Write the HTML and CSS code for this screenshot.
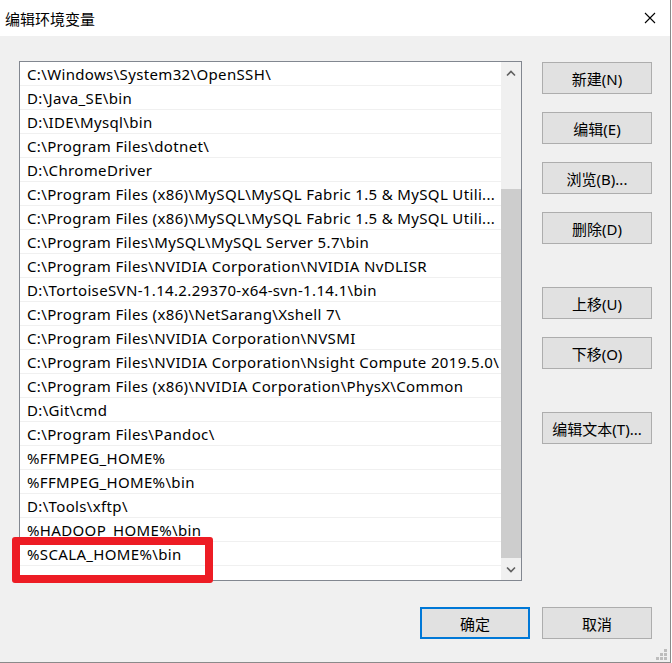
FILE: index.html
```html
<!DOCTYPE html>
<html lang="zh-CN">
<head>
    <meta charset="UTF-8">
    <title>编辑环境变量</title>
    <link rel="stylesheet" href="styles.css">
</head>
<body>
    <div class="window">
        <div class="titlebar">
            <span class="title">编辑环境变量</span>
            <svg class="close" width="12" height="12" viewBox="0 0 12 12">
                <path d="M1 1 L11 11 M11 1 L1 11" stroke="#000" stroke-width="1.1" fill="none"/>
            </svg>
        </div>

        <div class="content">
            <div class="main">
                <!-- liste des chemins -->
                <div class="path-list">
                    <div class="rows">
                        <div class="row">C:\Windows\System32\OpenSSH\</div>
                        <div class="row">D:\Java_SE\bin</div>
                        <div class="row">D:\IDE\Mysql\bin</div>
                        <div class="row">C:\Program Files\dotnet\</div>
                        <div class="row">D:\ChromeDriver</div>
                        <div class="row">C:\Program Files (x86)\MySQL\MySQL Fabric 1.5 &amp; MySQL Utili...</div>
                        <div class="row">C:\Program Files (x86)\MySQL\MySQL Fabric 1.5 &amp; MySQL Utili...</div>
                        <div class="row">C:\Program Files\MySQL\MySQL Server 5.7\bin</div>
                        <div class="row">C:\Program Files\NVIDIA Corporation\NVIDIA NvDLISR</div>
                        <div class="row">D:\TortoiseSVN-1.14.2.29370-x64-svn-1.14.1\bin</div>
                        <div class="row">C:\Program Files (x86)\NetSarang\Xshell 7\</div>
                        <div class="row">C:\Program Files\NVIDIA Corporation\NVSMI</div>
                        <div class="row">C:\Program Files\NVIDIA Corporation\Nsight Compute 2019.5.0\</div>
                        <div class="row">C:\Program Files (x86)\NVIDIA Corporation\PhysX\Common</div>
                        <div class="row">D:\Git\cmd</div>
                        <div class="row">C:\Program Files\Pandoc\</div>
                        <div class="row">%FFMPEG_HOME%</div>
                        <div class="row">%FFMPEG_HOME%\bin</div>
                        <div class="row">D:\Tools\xftp\</div>
                        <div class="row">%HADOOP_HOME%\bin</div>
                        <div class="row">%SCALA_HOME%\bin</div>
                        <div class="row"></div>
                    </div>
                    <div class="scrollbar">
                        <div class="arrow">
                            <svg width="10" height="7" viewBox="0 0 10 7">
                                <path d="M1 5.5 L5 1.5 L9 5.5" stroke="#606060" stroke-width="1.6" fill="none"/>
                            </svg>
                        </div>
                        <div class="track">
                            <div class="thumb"></div>
                        </div>
                        <div class="arrow">
                            <svg width="10" height="7" viewBox="0 0 10 7">
                                <path d="M1 1.5 L5 5.5 L9 1.5" stroke="#606060" stroke-width="1.6" fill="none"/>
                            </svg>
                        </div>
                    </div>
                </div>

                <div class="side-buttons">
                    <button class="btn">新建(N)</button>
                    <button class="btn">编辑(E)</button>
                    <button class="btn">浏览(B)...</button>
                    <button class="btn">删除(D)</button>
                    <button class="btn spaced">上移(U)</button>
                    <button class="btn">下移(O)</button>
                    <button class="btn spaced">编辑文本(T)...</button>
                </div>
            </div>

            <div class="footer">
                <button class="btn default">确定</button>
                <button class="btn">取消</button>
            </div>

            <div class="grip-row">
                <svg width="11" height="11" viewBox="0 0 11 11">
                    <rect x="8" y="0" width="3" height="3" fill="#bdbdbd"/>
                    <rect x="4" y="4" width="3" height="3" fill="#bdbdbd"/>
                    <rect x="8" y="4" width="3" height="3" fill="#bdbdbd"/>
                    <rect x="0" y="8" width="3" height="3" fill="#bdbdbd"/>
                    <rect x="4" y="8" width="3" height="3" fill="#bdbdbd"/>
                    <rect x="8" y="8" width="3" height="3" fill="#bdbdbd"/>
                </svg>
            </div>
        </div>

        <!-- cadre rouge autour de la nouvelle entrée -->
        <div class="highlight"></div>
    </div>
</body>
</html>
```

FILE: styles.css
```css
body {
    margin: 0;
    padding: 0;
    background-color: #fff;
    font-family: "Noto Sans", "Noto Sans CJK SC", sans-serif;
    font-size: 15px;
    color: #000;
}

.window {
    position: relative;
    width: 671px;
    height: 663px;
    box-sizing: border-box;
    background-color: #f0f0f0;
    border-right: 1px solid #8a8a8a;
    border-bottom: 1px solid #8a8a8a;
    display: flex;
    flex-direction: column;
}

/* Barre de titre */
.titlebar {
    height: 36px;
    background-color: #fff;
    display: flex;
    align-items: center;
    justify-content: space-between;
    padding: 0 14px 0 5px;
}

.title {
    font-family: "Noto Sans CJK SC", sans-serif;
    font-size: 15px;
}

.content {
    padding: 25px 18px 0 19px;
    display: flex;
    flex-direction: column;
}

.main {
    display: flex;
    gap: 20px;
}

/* Liste */
.path-list {
    width: 504px;
    height: 520px;
    box-sizing: border-box;
    border: 1px solid #828790;
    background-color: #fff;
    display: flex;
}

.rows {
    width: 481px;
    overflow: hidden;
}

.row {
    height: 21px;
    line-height: 21px;
    padding: 2px 0 0 7px;
    border-bottom: 1px solid #f0f0f0;
    letter-spacing: 0.35px;
    white-space: nowrap;
    overflow: hidden;
}

.scrollbar {
    width: 20px;
    background-color: #f0f0f0;
    display: flex;
    flex-direction: column;
}

.arrow {
    height: 22px;
    display: flex;
    align-items: center;
    justify-content: center;
}

.track {
    flex: 1;
    display: flex;
    flex-direction: column;
    justify-content: flex-end;
}

.thumb {
    height: 369px;
    background-color: #cdcdcd;
}

/* Boutons */
.side-buttons {
    display: flex;
    flex-direction: column;
    gap: 18px;
    padding-top: 1px;
}

.btn {
    width: 110px;
    height: 32px;
    box-sizing: border-box;
    background-color: #e1e1e1;
    border: 1px solid #adadad;
    font-family: "Noto Sans", "Noto Sans CJK SC", sans-serif;
    font-size: 15px;
    color: #000;
    padding: 0;
}

.btn.spaced {
    margin-top: 25px;
}

.btn.default {
    border: 2px solid #0078d7;
}

.footer {
    display: flex;
    justify-content: flex-end;
    gap: 12px;
    margin-top: 26px;
}

.grip-row {
    display: flex;
    justify-content: flex-end;
    margin-top: 10px;
    margin-right: -15px;
}

.highlight {
    position: absolute;
    left: 12px;
    top: 537px;
    width: 201px;
    height: 46px;
    box-sizing: border-box;
    border: 8px solid #ed1c24;
    border-radius: 3px;
}
```
